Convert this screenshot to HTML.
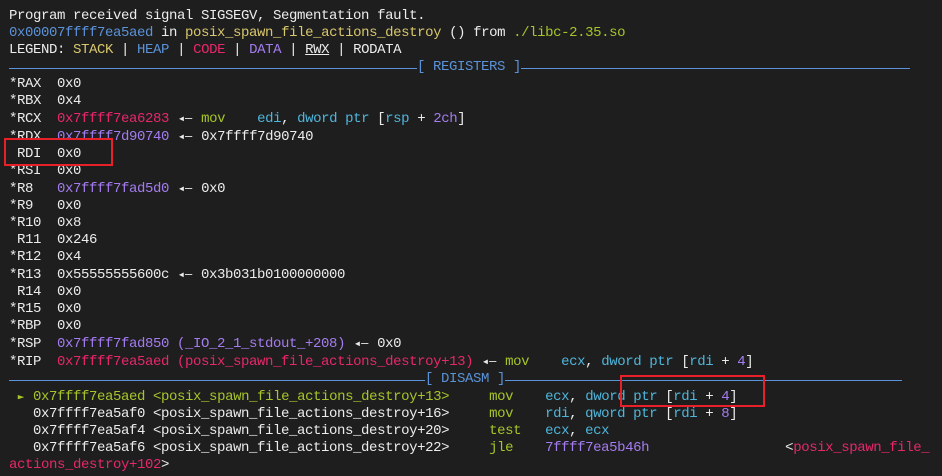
<!DOCTYPE html>
<html><head><meta charset="utf-8"><style>
html,body{margin:0;padding:0;background:#1e1e1e;width:942px;height:476px;overflow:hidden;position:relative}
pre{margin:0;position:absolute;left:9px;top:8px;font-family:"Liberation Mono","DejaVu Sans Mono",monospace;font-size:14px;letter-spacing:-0.4px;line-height:17px;color:#ececec;white-space:pre}
.y{color:#d9c76c}.b{color:#5b92d8}.p{color:#e8276b}.u{color:#a47cf0}.g{color:#a6c52a}.c{color:#4fb6dc}
.ar{display:inline-block;width:16px;font-family:"DejaVu Sans Mono",monospace;font-size:12px;letter-spacing:0;text-align:center}
.tri{display:inline-block;width:8px;font-family:"DejaVu Sans Mono",monospace;font-size:11px;letter-spacing:0;text-align:center}
.sep{display:inline-block;height:9px;border-bottom:1px solid #5b92d8;vertical-align:top}
.box{position:absolute;border:2.5px solid #e8202a}
</style></head><body>
<pre>Program received signal SIGSEGV, Segmentation fault.
<span class="b">0x00007ffff7ea5aed</span> in <span class="y">posix_spawn_file_actions_destroy</span> () from <span class="g">./libc-2.35.so</span>
LEGEND: <span class="y">STACK</span> | <span class="b">HEAP</span> | <span class="p">CODE</span> | <span class="u">DATA</span> | <u>RWX</u> | RODATA
<span class="sep" style="width:408px"></span><span class="b">[ REGISTERS ]</span><span class="sep" style="width:389px"></span>
*RAX  0x0
*RBX  0x4
*RCX  <span class="p">0x7ffff7ea6283</span> <span class="ar">◂—</span> <span class="g">mov</span>    <span class="c">edi</span>, <span class="c">dword ptr</span> [<span class="c">rsp</span> + <span class="u">2ch</span>]
*RDX  <span class="u">0x7ffff7d90740</span> <span class="ar">◂—</span> 0x7ffff7d90740
 RDI  0x0
*RSI  0x0
*R8   <span class="u">0x7ffff7fad5d0</span> <span class="ar">◂—</span> 0x0
*R9   0x0
*R10  0x8
 R11  0x246
*R12  0x4
*R13  0x55555555600c <span class="ar">◂—</span> 0x3b031b0100000000
 R14  0x0
*R15  0x0
*RBP  0x0
*RSP  <span class="u">0x7ffff7fad850 (_IO_2_1_stdout_+208)</span> <span class="ar">◂—</span> 0x0
*RIP  <span class="p">0x7ffff7ea5aed (posix_spawn_file_actions_destroy+13)</span> <span class="ar">◂—</span> <span class="g">mov</span>    <span class="c">ecx</span>, <span class="c">dword ptr</span> [<span class="c">rdi</span> + <span class="u">4</span>]
<span class="sep" style="width:416px"></span><span class="b">[ DISASM ]</span><span class="sep" style="width:397px"></span>
 <span class="tri g">►</span> <span class="g">0x7ffff7ea5aed &lt;posix_spawn_file_actions_destroy+13&gt;</span>     <span class="g">mov</span>    <span class="c">ecx</span>, <span class="c">dword ptr</span> [<span class="c">rdi</span> + <span class="u">4</span>]
   0x7ffff7ea5af0 &lt;posix_spawn_file_actions_destroy+16&gt;     <span class="g">mov</span>    <span class="c">rdi</span>, <span class="c">qword ptr</span> [<span class="c">rdi</span> + <span class="u">8</span>]
   0x7ffff7ea5af4 &lt;posix_spawn_file_actions_destroy+20&gt;     <span class="g">test</span>   <span class="c">ecx</span>, <span class="c">ecx</span>
   0x7ffff7ea5af6 &lt;posix_spawn_file_actions_destroy+22&gt;     <span class="g">jle</span>    <span class="u">7ffff7ea5b46h</span>                 &lt;<span class="p">posix_spawn_file_</span>
<span class="p">actions_destroy+102</span>&gt;</pre>
<div class="box" style="left:4px;top:138px;width:105px;height:24px"></div>
<div class="box" style="left:620px;top:375px;width:141px;height:28px"></div>
</body></html>
